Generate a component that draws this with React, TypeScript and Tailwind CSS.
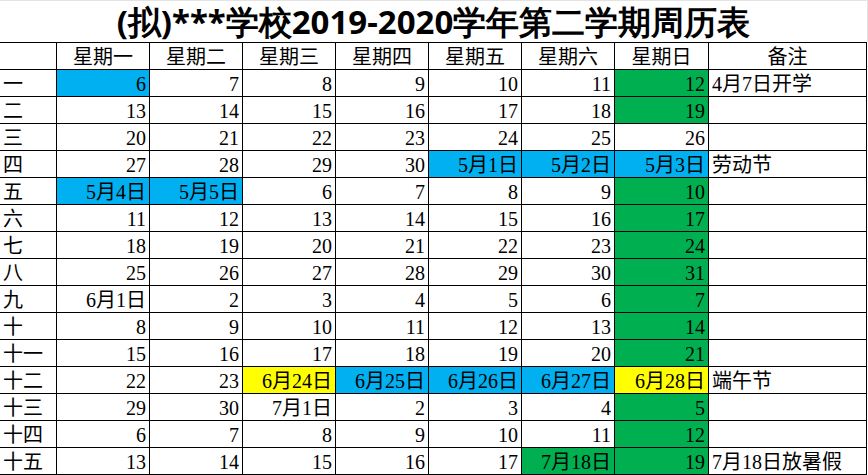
import clsx from 'clsx';

type Tone = 'blue' | 'green' | 'yellow' | undefined;
type Day = [string, Tone?];

const weeks: { label: string; days: Day[]; note?: string }[] = [
  { label: '一', days: [['6', 'blue'], ['7'], ['8'], ['9'], ['10'], ['11'], ['12', 'green']], note: '4月7日开学' },
  { label: '二', days: [['13'], ['14'], ['15'], ['16'], ['17'], ['18'], ['19', 'green']] },
  { label: '三', days: [['20'], ['21'], ['22'], ['23'], ['24'], ['25'], ['26']] },
  {
    label: '四',
    days: [['27'], ['28'], ['29'], ['30'], ['5月1日', 'blue'], ['5月2日', 'blue'], ['5月3日', 'blue']],
    note: '劳动节',
  },
  { label: '五', days: [['5月4日', 'blue'], ['5月5日', 'blue'], ['6'], ['7'], ['8'], ['9'], ['10', 'green']] },
  { label: '六', days: [['11'], ['12'], ['13'], ['14'], ['15'], ['16'], ['17', 'green']] },
  { label: '七', days: [['18'], ['19'], ['20'], ['21'], ['22'], ['23'], ['24', 'green']] },
  { label: '八', days: [['25'], ['26'], ['27'], ['28'], ['29'], ['30'], ['31', 'green']] },
  { label: '九', days: [['6月1日'], ['2'], ['3'], ['4'], ['5'], ['6'], ['7', 'green']] },
  { label: '十', days: [['8'], ['9'], ['10'], ['11'], ['12'], ['13'], ['14', 'green']] },
  { label: '十一', days: [['15'], ['16'], ['17'], ['18'], ['19'], ['20'], ['21', 'green']] },
  {
    label: '十二',
    days: [['22'], ['23'], ['6月24日', 'yellow'], ['6月25日', 'blue'], ['6月26日', 'blue'], ['6月27日', 'blue'], ['6月28日', 'yellow']],
    note: '端午节',
  },
  { label: '十三', days: [['29'], ['30'], ['7月1日'], ['2'], ['3'], ['4'], ['5', 'green']] },
  { label: '十四', days: [['6'], ['7'], ['8'], ['9'], ['10'], ['11'], ['12', 'green']] },
  {
    label: '十五',
    days: [['13'], ['14'], ['15'], ['16'], ['17'], ['7月18日', 'green'], ['19', 'green']],
    note: '7月18日放暑假',
  },
];

const headers = ['星期一', '星期二', '星期三', '星期四', '星期五', '星期六', '星期日'];

function Cell({
  children,
  align = 'right',
  tone,
}: {
  children?: React.ReactNode;
  align?: 'left' | 'right' | 'center';
  tone?: Tone;
}) {
  return (
    <div
      className={clsx(
        'flex h-[27px] items-end overflow-hidden whitespace-nowrap border-r border-b border-black pb-[1px] text-[20px] leading-[22px] text-black',
        align === 'right' && 'justify-end pr-[3px]',
        align === 'left' && 'justify-start pl-[3px]',
        align === 'center' && 'justify-center',
        tone === 'blue' && 'bg-[#00b0f0]',
        tone === 'green' && 'bg-[#00b050]',
        tone === 'yellow' && 'bg-[#ffff00]',
      )}
    >
      {children}
    </div>
  );
}

export default function App() {
  return (
    <div className="h-[475px] w-[868px] overflow-hidden border-t border-[#e3e3e3] bg-white">
      <div className="h-[41px] border-r border-[#e3e3e3] text-center font-sans text-[33px] leading-[41px] font-bold text-black">
        (拟)***学校2019-2020学年第二学期周历表
      </div>
      <div className="grid w-[867px] grid-cols-[57px_93px_93px_93px_93px_93px_93px_94px_158px] border-t border-black [font-family:Liberation_Serif,Noto_Sans_CJK_SC,serif]">
        <Cell />
        {headers.map((h) => (
          <Cell key={h} align="center">
            {h}
          </Cell>
        ))}
        <Cell align="center">备注</Cell>

        {weeks.map((w) => (
          <div key={w.label} className="contents">
            <Cell align="left">{w.label}</Cell>
            {w.days.map(([text, tone], i) => (
              <Cell key={i} tone={tone}>
                {text}
              </Cell>
            ))}
            <Cell align="left">{w.note}</Cell>
          </div>
        ))}
      </div>
    </div>
  );
}
